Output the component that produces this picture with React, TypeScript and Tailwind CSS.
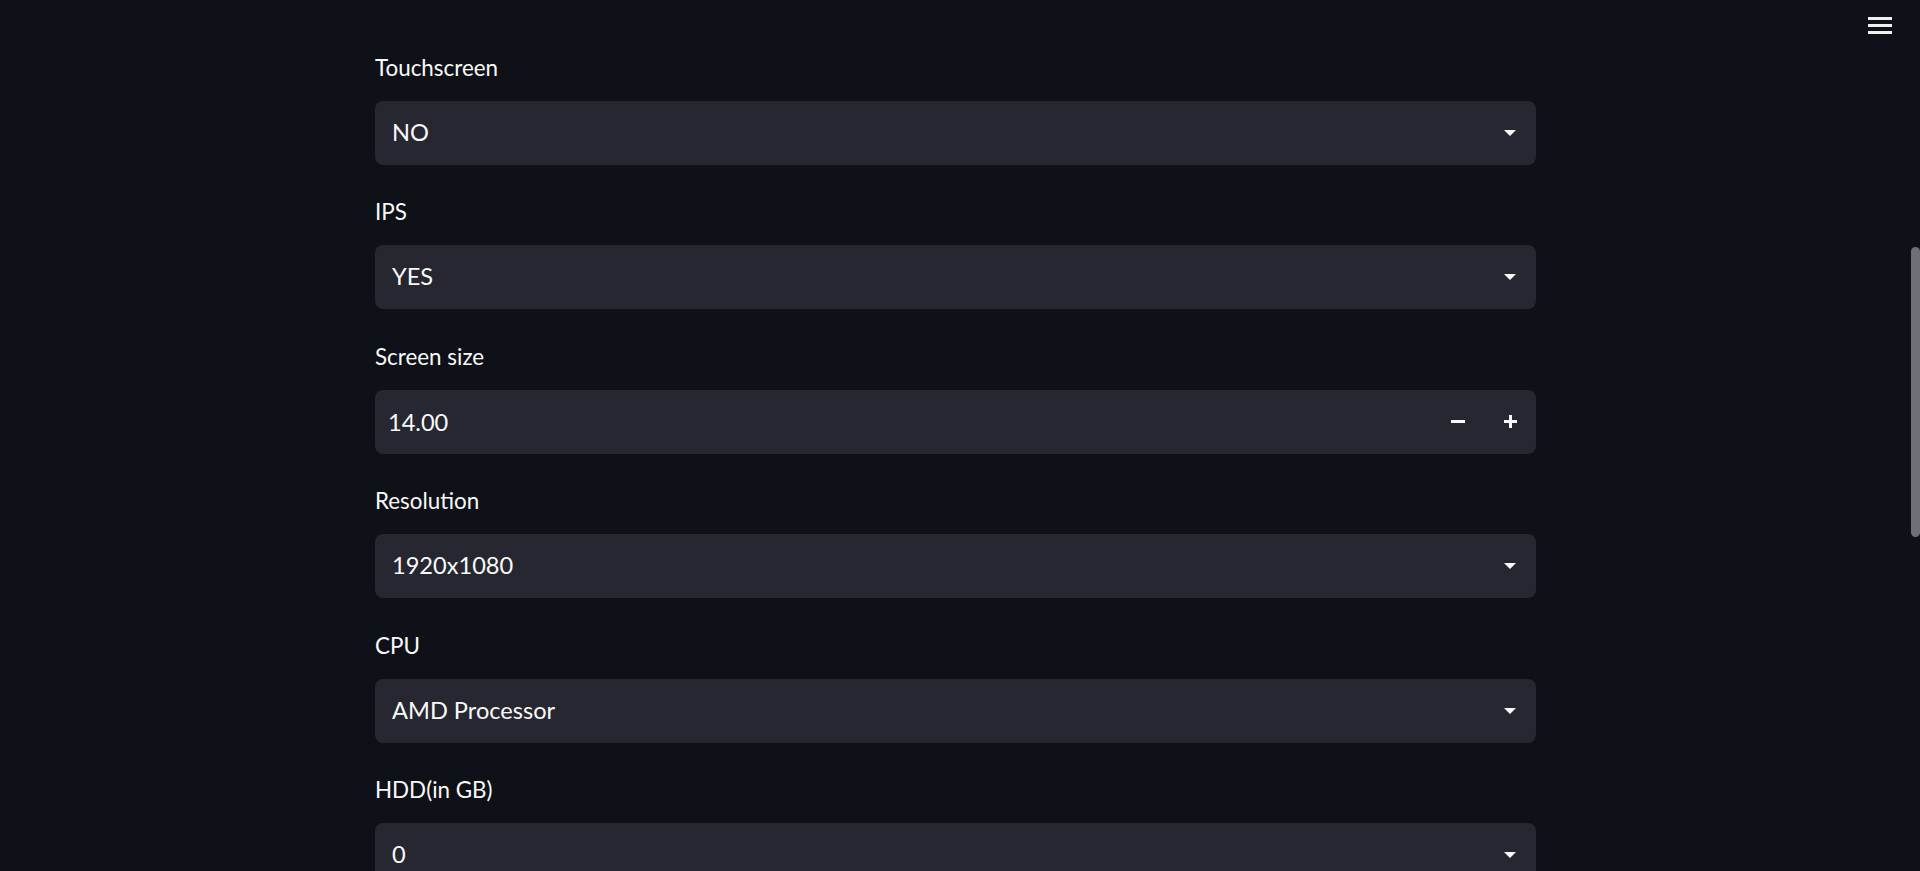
import React from "react";

type Field =
  | { kind: "select"; label: string; value: string }
  | { kind: "number"; label: string; value: string };

const fields: Field[] = [
  { kind: "select", label: "Touchscreen", value: "NO" },
  { kind: "select", label: "IPS", value: "YES" },
  { kind: "number", label: "Screen size", value: "14.00" },
  { kind: "select", label: "Resolution", value: "1920x1080" },
  { kind: "select", label: "CPU", value: "AMD Processor" },
  { kind: "select", label: "HDD(in GB)", value: "0" },
];

function Caret() {
  return (
    <svg width="12" height="6" viewBox="0 0 12 6" className="shrink-0">
      <path d="M0 0h12L6 6z" fill="#fafafa" />
    </svg>
  );
}

function SelectBox({ value }: { value: string }) {
  return (
    <div className="h-[64px] w-full rounded-[8px] bg-[#262730] flex items-center pl-[17px] pr-[20px] cursor-pointer">
      <span className="flex-1 text-[23.6px] text-[#fafafa]">{value}</span>
      <Caret />
    </div>
  );
}

function NumberBox({ value }: { value: string }) {
  return (
    <div className="h-[64px] w-full rounded-[8px] bg-[#262730] flex items-center">
      <input
        readOnly
        value={value}
        className="flex-1 h-full bg-transparent pl-[13px] text-[23.6px] text-[#fafafa] outline-none"
      />
      <button className="w-[52px] h-full flex items-center justify-center" aria-label="Decrement">
        <span className="block w-[14px] h-[3px] bg-[#fafafa]" />
      </button>
      <button className="w-[52px] h-full flex items-center justify-center" aria-label="Increment">
        <span className="relative block w-[13px] h-[13px]">
          <span className="absolute left-0 top-[5px] w-[13px] h-[3px] bg-[#fafafa]" />
          <span className="absolute top-0 left-[5px] w-[3px] h-[13px] bg-[#fafafa]" />
        </span>
      </button>
    </div>
  );
}

export default function App() {
  return (
    <div
      className="relative h-[871px] w-full overflow-hidden bg-[#0e1117] text-[#fafafa]"
      style={{ fontFamily: "Lato, 'Liberation Sans', sans-serif" }}
    >
      {/* top-right menu */}
      <button className="absolute top-[17px] right-[28px] flex flex-col gap-[4.5px]" aria-label="Menu">
        <span className="block w-[24px] h-[2.5px] bg-[#f0f0f0]" />
        <span className="block w-[24px] h-[2.5px] bg-[#f0f0f0]" />
        <span className="block w-[24px] h-[2.5px] bg-[#f0f0f0]" />
      </button>

      {/* scrollbar thumb */}
      <div className="absolute left-[1911px] top-[247px] w-[9px] h-[290px] rounded-full bg-[#6f7075]" />

      <div className="ml-[375px] w-[1161px] pt-[47.5px] flex flex-col gap-[27.5px]">
        {fields.map((f) => (
          <div key={f.label} className="flex flex-col">
            <label className="h-[40px] mb-[13px] flex items-center text-[22.4px] text-[#fafafa]">{f.label}</label>
            {f.kind === "select" ? <SelectBox value={f.value} /> : <NumberBox value={f.value} />}
          </div>
        ))}
      </div>
    </div>
  );
}
